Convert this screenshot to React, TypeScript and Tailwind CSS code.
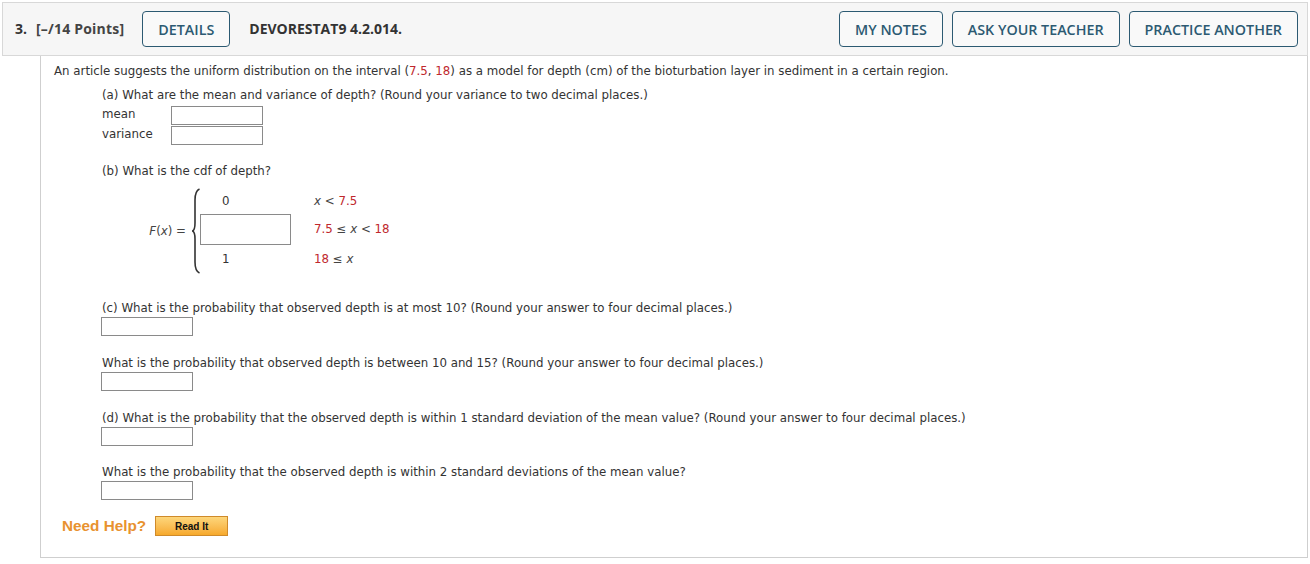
import React from "react";

const Box = ({ w = "w-[92px]", h = "h-[19px]" }: { w?: string; h?: string }) => (
  <div className={`${w} ${h} border border-[#8a8a8a] bg-white`} />
);

const Btn = ({ children }: { children: React.ReactNode }) => (
  <div className="h-[36px] px-[15px] pt-[2px] flex items-center border border-[#2c5a72] rounded-[4px] text-[#2c5a72] text-[14.3px] font-semibold bg-[#f9f9f9]">
    {children}
  </div>
);

export default function App() {
  const red = "text-[#c0282d]";
  return (
    <div className="w-[1310px] h-[564px] bg-white pt-[2px] text-[#333]">
      {/* header */}
      <div
        className="ml-[2px] w-[1306px] h-[54px] border border-[#d8d8d8] bg-[#f6f6f6] flex items-center pl-[12px] pr-[9px] pb-[1px]"
        style={{ fontFamily: '"Open Sans", sans-serif' }}
      >
        <span className="text-[14px] font-bold text-[#333] pb-[1px]">3.</span>
        <span className="ml-[9px] text-[14px] font-bold text-[#444] tracking-[0.2px] pb-[1px]">[–/14 Points]</span>
        <div className="ml-[18px]">
          <Btn>DETAILS</Btn>
        </div>
        <span className="ml-[19px] text-[14px] font-bold text-[#333] pb-[1px]">DEVORESTAT9 4.2.014.</span>
        <div className="ml-auto flex gap-[9px]">
          <Btn>MY NOTES</Btn>
          <Btn>ASK YOUR TEACHER</Btn>
          <Btn>PRACTICE ANOTHER</Btn>
        </div>
      </div>

      {/* body */}
      <div
        className="ml-[40px] w-[1268px] border-l border-r border-b border-[#cfcfcf] pl-[13px] pt-[5px] pb-[21px] text-[11.8px] text-[#333]"
        style={{ fontFamily: '"DejaVu Sans", Verdana, sans-serif' }}
      >
        <div className="h-[20px] leading-[20px]">
          An article suggests the uniform distribution on the interval (<span className={red}>7.5</span>,{" "}
          <span className={red}>18</span>) as a model for depth (cm) of the bioturbation layer in sediment in a certain region.
        </div>

        <div className="ml-[48px]">
          <div className="mt-[4px] h-[20px] leading-[20px]">
            (a) What are the mean and variance of depth? (Round your variance to two decimal places.)
          </div>
          <div className="flex items-center h-[20px]">
            <span className="w-[69px] leading-[18px] pb-[2px]">mean</span>
            <Box />
          </div>
          <div className="flex items-center h-[20px]">
            <span className="w-[69px] leading-[18px] pb-[2px]">variance</span>
            <Box />
          </div>

          <div className="mt-[16px] h-[20px] leading-[20px]">(b) What is the cdf of depth?</div>

          <div className="mt-[8px] flex">
            <div className="w-[90px] flex items-center justify-end pr-[6px]">
              <span className="text-[#444]">
                <i>F</i>(<i>x</i>) =
              </span>
            </div>
            <svg width="8" height="86" viewBox="0 0 8 86" className="mt-[-1px]">
              <path
                d="M7.5 1 Q3 3 3 12 L3 35 Q3 42 0.5 43 Q3 44 3 51 L3 74 Q3 83 7.5 85"
                fill="none"
                stroke="#333"
                strokeWidth="1.6"
              />
            </svg>
            <div className="flex flex-col">
              <div className="h-[25px] flex items-center pl-[22px] pt-[1px]">0</div>
              <div className="h-[31px] flex items-center">
                <div className="w-[91px] h-[31px] border border-[#8a8a8a] bg-white" />
              </div>
              <div className="h-[30px] flex items-center pl-[22px]">1</div>
            </div>
            <div className="flex flex-col ml-[23px]">
              <div className="h-[25px] flex items-center pt-[1px]">
                <span className="text-[#444]">
                  <i>x</i> &lt; <span className={red}>7.5</span>
                </span>
              </div>
              <div className="h-[31px] flex items-center">
                <span className="text-[#444]">
                  <span className={red}>7.5</span> ≤ <i>x</i> &lt; <span className={red}>18</span>
                </span>
              </div>
              <div className="h-[30px] flex items-center">
                <span className="text-[#444]">
                  <span className={red}>18</span> ≤ <i>x</i>
                </span>
              </div>
            </div>
          </div>

          <div className="mt-[24px] h-[18px] leading-[18px]">
            (c) What is the probability that observed depth is at most 10? (Round your answer to four decimal places.)
          </div>
          <div className="ml-[-1px]">
            <Box />
          </div>

          <div className="mt-[18px] h-[18px] leading-[18px]">
            What is the probability that observed depth is between 10 and 15? (Round your answer to four decimal places.)
          </div>
          <div className="ml-[-1px]">
            <Box />
          </div>

          <div className="mt-[18px] h-[18px] leading-[18px]">
            (d) What is the probability that the observed depth is within 1 standard deviation of the mean value? (Round your
            answer to four decimal places.)
          </div>
          <div className="ml-[-1px]">
            <Box />
          </div>

          <div className="mt-[17px] h-[18px] leading-[18px]">
            What is the probability that the observed depth is within 2 standard deviations of the mean value?
          </div>
          <div className="ml-[-1px]">
            <Box />
          </div>
        </div>

        <div className="mt-[16px] ml-[8px] flex items-center h-[20px]" style={{ fontFamily: '"Liberation Sans", Arial, sans-serif' }}>
          <span className="text-[15.3px] font-bold text-[#e8922f] leading-[18px] pb-[1px]">Need Help?</span>
          <div className="ml-[9px] w-[73px] h-[20px] border border-[#cf8a2a] bg-gradient-to-b from-[#fdd67a] to-[#f6a92a] flex items-center justify-center text-[10px] font-bold text-[#111]">
            Read It
          </div>
        </div>
      </div>
    </div>
  );
}
